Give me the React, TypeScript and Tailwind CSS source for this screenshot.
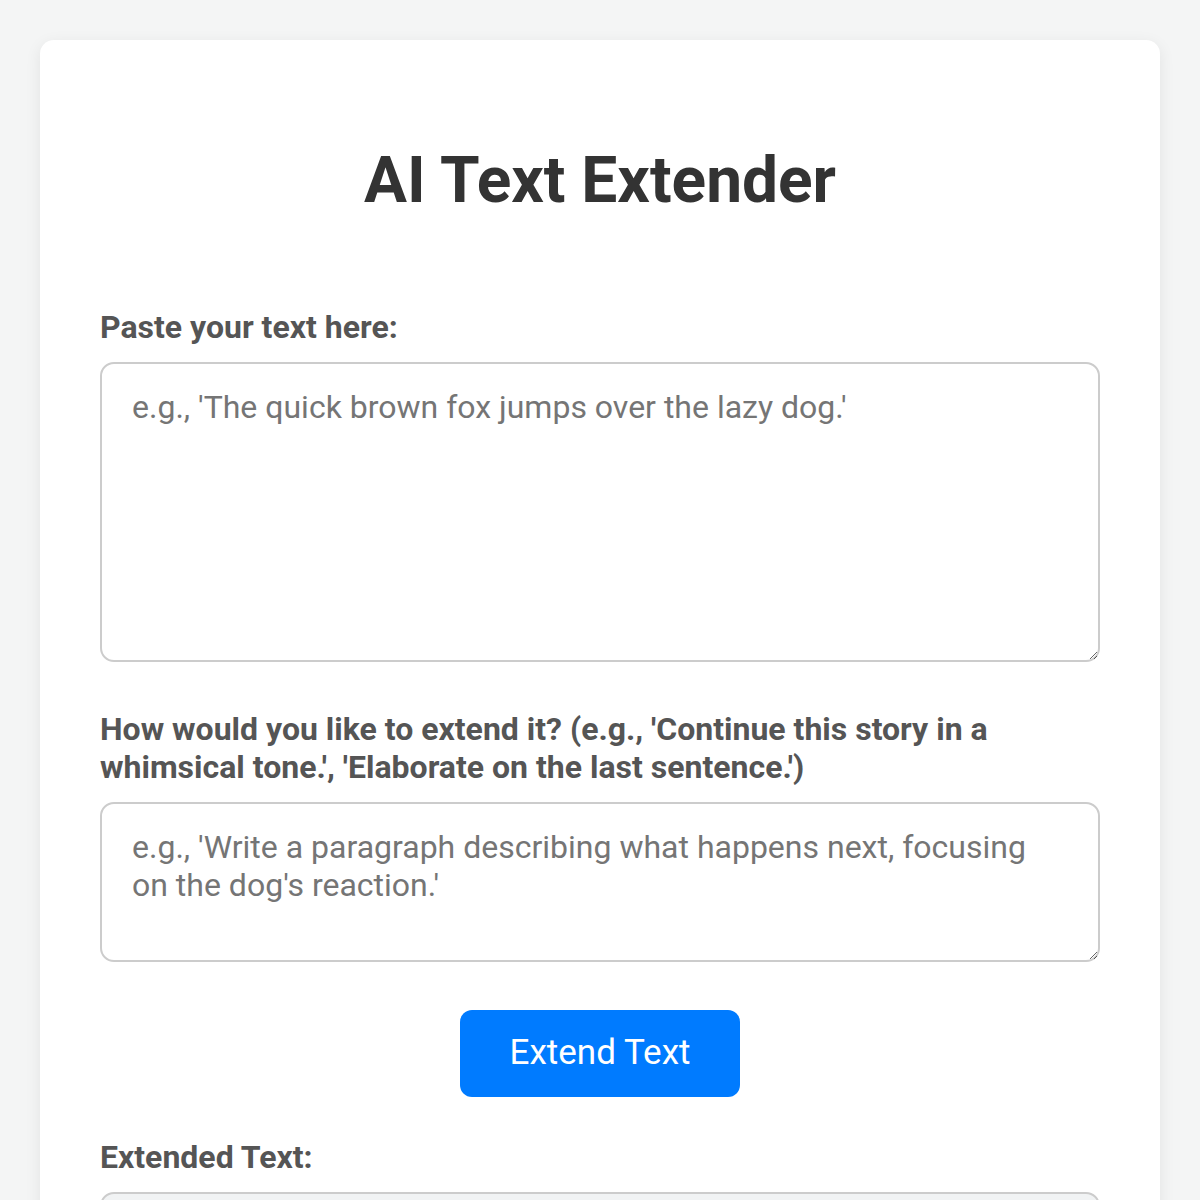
export default function App() {
  return (
    <div className="min-h-[1200px] bg-[#f4f5f5] px-[40px] pt-[40px]" style={{ fontFamily: 'Roboto, "Liberation Sans", sans-serif' }}>
      <div className="rounded-[14px] bg-white px-[60px] pb-[60px] pt-[103px] shadow-[0_4px_16px_rgba(0,0,0,0.08)]">
        <h1 className="mb-[90px] text-center text-[64px] font-bold leading-[75px] text-[#333]">AI Text Extender</h1>

        <label className="mb-[16px] block text-[32px] font-bold leading-[38px] text-[#555]">Paste your text here:</label>
        <textarea
          className="block h-[300px] w-full resize-y rounded-[14px] border-2 border-[#ccc] px-[30px] py-[24px] text-[32px] leading-[38px] text-[#333] placeholder:text-[#757575] outline-none"
          placeholder="e.g., 'The quick brown fox jumps over the lazy dog.'"
        />

        <label className="mb-[16px] mt-[48px] block text-[32px] font-bold leading-[38px] text-[#555]">
          How would you like to extend it? (e.g., 'Continue this story in a whimsical tone.', 'Elaborate on the last sentence.')
        </label>
        <textarea
          className="block h-[160px] w-full resize-y rounded-[14px] border-2 border-[#ccc] px-[30px] py-[24px] text-[32px] leading-[38px] text-[#333] placeholder:text-[#757575] outline-none"
          placeholder="e.g., 'Write a paragraph describing what happens next, focusing on the dog's reaction.'"
        />

        <div className="mt-[48px] flex justify-center">
          <button className="h-[87px] w-[280px] rounded-[12px] bg-[#007bff] text-[35px] text-white">Extend Text</button>
        </div>

        <label className="mb-[16px] mt-[41px] block text-[32px] font-bold leading-[38px] text-[#555]">Extended Text:</label>
        <div className="h-[200px] rounded-[14px] border-2 border-[#ccc] bg-[#f1f3f4]" />
      </div>
    </div>
  );
}
